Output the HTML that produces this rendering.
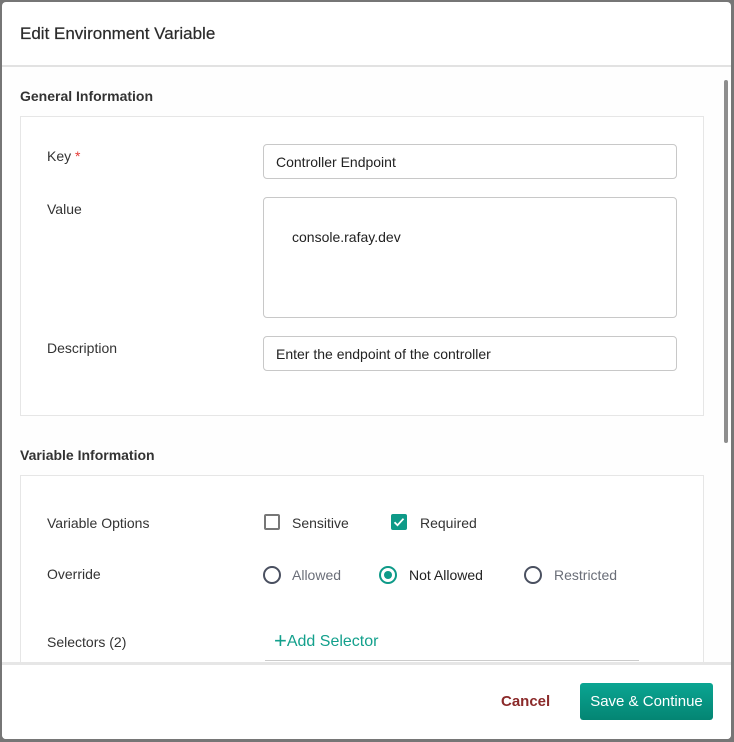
<!DOCTYPE html>
<html><head><style>
*{box-sizing:border-box;margin:0;padding:0}
body{width:734px;height:742px;background:#767676;font-family:"Liberation Sans",sans-serif;position:relative;overflow:hidden}
.dlg{position:absolute;left:2px;top:2px;width:729px;height:737px;background:#fff;border-radius:4px;overflow:hidden}
.a{position:absolute}
.inp{position:absolute;border:1px solid #c8c8c8;border-radius:4px;background:#fff;font-size:14px;color:#222}
.lbl{position:absolute;font-size:14px;color:#333}
.sec{position:absolute;font-size:14px;font-weight:bold;color:#333}
.box{position:absolute;border:1px solid #e6e6e6;background:#fff}
.cb{position:absolute;width:16px;height:16px;border-radius:2px}
.rad{position:absolute;width:18px;height:18px;border-radius:50%;border:2px solid #4a5060}
</style></head><body>
<div class="dlg">
<div class="a" style="left:18px;top:22px;font-size:17px;color:#2a2a2a;-webkit-text-stroke:0.2px #2a2a2a">Edit Environment Variable</div>
<div class="a" style="left:0;top:63px;width:729px;height:2px;background:#e2e2e2"></div>
<div class="a" style="left:0;top:65px;width:729px;height:595px;background:#fefefe"></div>
<div class="sec" style="left:18px;top:86px">General Information</div>
<div class="box" style="left:18px;top:114px;width:684px;height:300px"></div>
<div class="lbl" style="left:45px;top:146px">Key <span style="color:#e53935">*</span></div>
<div class="inp" style="left:261px;top:142px;width:414px;height:35px;padding:9px 12px">Controller Endpoint</div>
<div class="lbl" style="left:45px;top:199px">Value</div>
<div class="inp" style="left:261px;top:195px;width:414px;height:121px;padding:31px 28px">console.rafay.dev</div>
<div class="lbl" style="left:45px;top:338px">Description</div>
<div class="inp" style="left:261px;top:334px;width:414px;height:35px;padding:9px 12px">Enter the endpoint of the controller</div>
<div class="sec" style="left:18px;top:445px">Variable Information</div>
<div class="box" style="left:18px;top:473px;width:684px;height:200px"></div>
<div class="lbl" style="left:45px;top:513px">Variable Options</div>
<div class="cb" style="left:262px;top:512px;border:2px solid #777"></div>
<div class="lbl" style="left:290px;top:513px">Sensitive</div>
<div class="cb" style="left:389px;top:512px;background:#0e9a88">
<svg width="16" height="16" viewBox="0 0 16 16"><path d="M3.5 8.2l3 3 6-6.5" fill="none" stroke="#fff" stroke-width="1.8"/></svg></div>
<div class="lbl" style="left:418px;top:513px">Required</div>
<div class="lbl" style="left:45px;top:564px">Override</div>
<div class="rad" style="left:261px;top:564px"></div>
<div class="lbl" style="left:290px;top:565px;color:#6a6e78">Allowed</div>
<div class="rad" style="left:377px;top:564px;border-color:#0e9a88"><div style="position:absolute;left:3px;top:3px;width:8px;height:8px;border-radius:50%;background:#0e9a88"></div></div>
<div class="lbl" style="left:407px;top:565px;color:#222">Not Allowed</div>
<div class="rad" style="left:522px;top:564px"></div>
<div class="lbl" style="left:552px;top:565px;color:#6a6e78">Restricted</div>
<div class="lbl" style="left:45px;top:632px">Selectors (2)</div>
<div class="lbl" style="left:272px;top:626px;color:#13a08c;font-size:16px"><span style="font-size:22px;font-weight:300;vertical-align:-2px">+</span>Add Selector</div>
<div class="a" style="left:263px;top:658px;width:374px;height:1px;background:#ccc"></div>
<div class="a" style="left:722px;top:78px;width:4px;height:363px;border-radius:2px;background:#8e8e8e"></div>
<div class="a" style="left:0;top:660px;width:729px;height:3px;background:#e6e6e6"></div>
<div class="a" style="left:0;top:663px;width:729px;height:74px;background:#fff"></div>
<div class="a" style="left:499px;top:691px;font-size:15px;color:#8b2a2a;font-weight:bold">Cancel</div>
<div class="a" style="left:578px;top:681px;width:133px;height:37px;border-radius:3px;background:linear-gradient(#0aa592,#048573);color:#fff;font-size:15px;text-align:center;line-height:37px">Save &amp; Continue</div>
</div>
</body></html>
